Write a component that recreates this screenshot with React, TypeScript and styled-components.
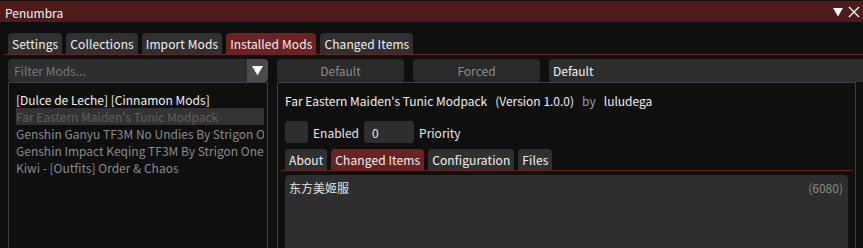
import styled, { createGlobalStyle } from "styled-components";

const GlobalStyle = createGlobalStyle`
  html, body {
    margin: 0;
    padding: 0;
    background: #0f0f0f;
  }
  body {
    font-family: "Noto Sans CJK JP", "Noto Sans", sans-serif;
    font-size: 12px;
    font-weight: 400;
    color: #e6e6e6;
  }
`;

const Window = styled.div`
  width: 863px;
  height: 248px;
  overflow: hidden;
  display: flex;
  flex-direction: column;
  background: #0f0f0f;
`;

const TitleBar = styled.div`
  height: 22px;
  border-top: 1px solid #141010;
  background: #4f1a1a;
  display: flex;
  align-items: center;
  justify-content: space-between;
  padding: 1px 3px 0 5px;
  box-sizing: border-box;
  color: #f2f2f2;
  flex-shrink: 0;
`;

const TitleIcons = styled.div`
  display: flex;
  align-items: center;
  gap: 5px;
`;

const Body = styled.div`
  flex: 1;
  display: flex;
  flex-direction: column;
  padding: 11px 0 0 8px;
  min-height: 0;
`;

const TabBar = styled.div`
  display: flex;
  gap: 4px;
  margin-left: -4px;
  padding-left: 4px;
  border-bottom: 1px solid #6b2020;
  flex-shrink: 0;
`;

const Tab = styled.div<{ $active?: boolean }>`
  height: 21px;
  padding: 0 4px;
  display: flex;
  align-items: center;
  border-radius: 4px 4px 0 0;
  background: ${(p) => (p.$active ? "#6b2222" : "#303030")};
  color: #f0f0f0;
  white-space: nowrap;
  letter-spacing: 0.1px;
`;

const Columns = styled.div`
  flex: 1;
  display: flex;
  gap: 9px;
  margin-top: 4px;
  min-height: 0;
`;

const LeftColumn = styled.div`
  width: 260px;
  display: flex;
  flex-direction: column;
  flex-shrink: 0;
`;

const RightColumn = styled.div`
  flex: 1;
  display: flex;
  flex-direction: column;
  min-width: 0;
`;

const ControlRow = styled.div`
  height: 23px;
  display: flex;
  gap: 9px;
  flex-shrink: 0;
`;

const FilterGroup = styled.div`
  display: flex;
  height: 23px;
  flex-shrink: 0;
`;

const FilterInput = styled.div`
  flex: 1;
  display: flex;
  align-items: center;
  padding: 0 6px;
  background: #2e2e2e;
  border-radius: 4px 0 0 4px;
  color: #777777;
`;

const DropButton = styled.div`
  width: 21px;
  display: flex;
  align-items: center;
  justify-content: center;
  background: #4b4b4b;
  border-radius: 0 4px 4px 0;
`;

const ModeButton = styled.div`
  width: 127px;
  display: flex;
  align-items: center;
  justify-content: center;
  background: #2a2a2a;
  border-radius: 4px;
  color: #8c8c8c;
`;

const Combo = styled.div`
  flex: 1;
  display: flex;
  align-items: center;
  padding: 0 4px;
  background: #2e2e2e;
  border-radius: 4px 0 0 4px;
  color: #f2f2f2;
`;

const Panel = styled.div<{ $right?: number }>`
  flex: 1;
  border: 1px solid #3e3e46;
  border-bottom: none;
  margin-right: ${(p) => p.$right ?? 0}px;
  display: flex;
  flex-direction: column;
  min-height: 0;
`;

const ModList = styled.div`
  padding: 8px 3px 0 7px;
  display: flex;
  flex-direction: column;
`;

const ModItem = styled.div<{ $tone: "main" | "dim" | "selected" }>`
  height: 17px;
  line-height: 17px;
  white-space: nowrap;
  overflow: hidden;
  color: ${(p) =>
    p.$tone === "main" ? "#f0f0f0" : p.$tone === "selected" ? "#5e5e5e" : "#8a8a8a"};
  background: ${(p) => (p.$tone === "selected" ? "#333333" : "transparent")};
`;

const Details = styled.div`
  padding: 8px 0 0 7px;
  display: flex;
  flex-direction: column;
  flex: 1;
`;

const ModTitle = styled.div`
  height: 18px;
  display: flex;
  align-items: center;
  gap: 8px;
  white-space: nowrap;
  color: #f0f0f0;
`;

const Muted = styled.span`
  color: #9a9a9a;
`;

const SettingRow = styled.div`
  display: flex;
  align-items: center;
  height: 22px;
  margin-top: 12px;
  gap: 5px;
`;

const CheckBox = styled.div`
  width: 23px;
  height: 22px;
  border-radius: 4px;
  background: #2e2e2e;
`;

const PriorityInput = styled.div`
  width: 42px;
  height: 22px;
  padding-left: 8px;
  display: flex;
  align-items: center;
  border-radius: 4px;
  background: #2e2e2e;
`;

const TabWrap = styled.div`
  margin-top: 6px;
  margin-right: 2px;
`;

const ItemsBox = styled.div`
  flex: 1;
  margin: 4px 7px 0 0;
  background: #2e2e2e;
  border-radius: 4px 4px 0 0;
  display: flex;
  justify-content: space-between;
  padding: 4px 5px 0 4px;
  font-family: "Noto Sans CJK SC", "Noto Sans", sans-serif;
`;

const Count = styled.span`
  color: #8a8a8a;
`;

const Triangle = ({ size = 9 }: { size?: number }) => (
  <svg width={size} height={size * 0.85} viewBox="0 0 10 8.5">
    <path d="M0 0 H10 L5 8.5 Z" fill="#ffffff" />
  </svg>
);

const Cross = () => (
  <svg width="12" height="12" viewBox="0 0 12 12">
    <path d="M1 1 L11 11 M11 1 L1 11" stroke="#ffffff" strokeWidth="1.3" />
  </svg>
);

const mods: { name: string; tone: "main" | "dim" | "selected" }[] = [
  { name: "[Dulce de Leche] [Cinnamon Mods]", tone: "main" },
  { name: "Far Eastern Maiden's Tunic Modpack", tone: "selected" },
  { name: "Genshin Ganyu TF3M No Undies By Strigon One", tone: "dim" },
  { name: "Genshin Impact Keqing TF3M By Strigon One", tone: "dim" },
  { name: "Kiwi - [Outfits] Order & Chaos", tone: "dim" },
];

export default function App() {
  return (
    <>
      <GlobalStyle />
      <Window>
        <TitleBar>
          <span>Penumbra</span>
          <TitleIcons>
            <Triangle size={10} />
            <Cross />
          </TitleIcons>
        </TitleBar>
        <Body>
          <TabBar>
            <Tab>Settings</Tab>
            <Tab>Collections</Tab>
            <Tab>Import Mods</Tab>
            <Tab $active>Installed Mods</Tab>
            <Tab>Changed Items</Tab>
          </TabBar>
          <Columns>
            <LeftColumn>
              <FilterGroup>
                <FilterInput>Filter Mods...</FilterInput>
                <DropButton>
                  <Triangle size={11} />
                </DropButton>
              </FilterGroup>
              <Panel>
                <ModList>
                  {mods.map((m) => (
                    <ModItem key={m.name} $tone={m.tone}>
                      {m.name}
                    </ModItem>
                  ))}
                </ModList>
              </Panel>
            </LeftColumn>
            <RightColumn>
              <ControlRow>
                <ModeButton>Default</ModeButton>
                <ModeButton>Forced</ModeButton>
                <Combo>Default</Combo>
              </ControlRow>
              <Panel $right={7}>
                <Details>
                  <ModTitle>
                    <span>Far Eastern Maiden's Tunic Modpack</span>
                    <span>(Version 1.0.0)</span>
                    <Muted>by</Muted>
                    <span>luludega</span>
                  </ModTitle>
                  <SettingRow>
                    <CheckBox />
                    <span>Enabled</span>
                    <PriorityInput>0</PriorityInput>
                    <span>Priority</span>
                  </SettingRow>
                  <TabWrap>
                    <TabBar>
                      <Tab>About</Tab>
                      <Tab $active>Changed Items</Tab>
                      <Tab>Configuration</Tab>
                      <Tab>Files</Tab>
                    </TabBar>
                  </TabWrap>
                  <ItemsBox>
                    <span>东方美姬服</span>
                    <Count>(6080)</Count>
                  </ItemsBox>
                </Details>
              </Panel>
            </RightColumn>
          </Columns>
        </Body>
      </Window>
    </>
  );
}
